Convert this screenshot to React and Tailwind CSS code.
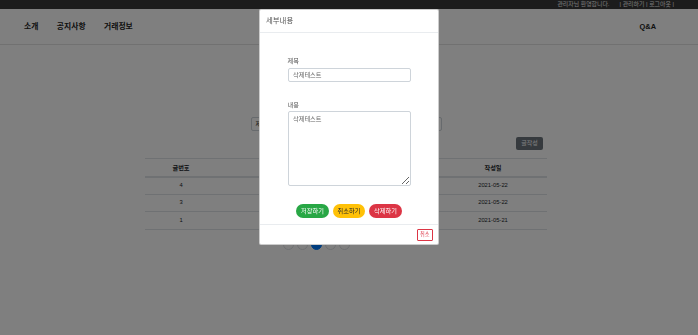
function TopBar() {
  return (
    <div className="flex h-[9px] items-center justify-end gap-[10px] bg-[#383838] pr-[24px] text-[5.9px] leading-none text-[#f0f0f0]">
      <span>관리자님 환영합니다.</span>
      <span>| 관리하기 | 로그아웃 |</span>
    </div>
  );
}

function NavBar() {
  return (
    <nav className="flex h-[36px] items-center justify-between border-b border-[#e2e2e2] pl-[24px] pr-[42px] text-[7.8px] font-bold text-[#222]">
      <div className="flex gap-[18.5px]">
        <span>소개</span>
        <span>공지사항</span>
        <span>거래정보</span>
      </div>
      <span className="text-[7.4px]">Q&amp;A</span>
    </nav>
  );
}

const rows = [
  { no: 4, date: '2021-05-22' },
  { no: 3, date: '2021-05-22' },
  { no: 1, date: '2021-05-21' },
];

function Board() {
  return (
    <div className="ml-[145px] w-[402px]">
      <div className="mt-[72px] flex justify-center">
        <div className="flex h-[14px] w-[191px] items-center rounded-[2px] border border-[#ced4da] px-[4px] text-[6px] text-[#212529]">
          제목
        </div>
      </div>
      <div className="mt-[6px] flex justify-end pr-[4px]">
        <button className="h-[13px] w-[27px] rounded-[2px] bg-[#6c757d] text-[6px] text-white">글작성</button>
      </div>
      <table className="mt-[8px] w-full border-collapse text-[5.8px] text-[#212529]">
        <thead>
          <tr className="h-[18px] border-t border-b-2 border-[#dee2e6] text-[6.2px]">
            <th className="w-[72px] font-bold">글번호</th>
            <th className="w-[111px] font-bold">제목</th>
            <th className="w-[111px] font-bold">작성자</th>
            <th className="w-[108px] font-bold">작성일</th>
          </tr>
        </thead>
        <tbody>
          {rows.map((row) => (
            <tr key={row.no} className="h-[17.5px] border-b border-[#dee2e6] text-center">
              <td>{row.no}</td>
              <td>삭제테스트</td>
              <td>관리자</td>
              <td>{row.date}</td>
            </tr>
          ))}
        </tbody>
      </table>
      <div className="mt-[9px] flex justify-center gap-[3px] pr-[60px]">
        {[1, 2, 3, 4, 5].map((n) => (
          <span
            key={n}
            className={`h-[11px] w-[11px] rounded-full border ${n === 3 ? 'border-[#007bff] bg-[#007bff]' : 'border-[#dee2e6] bg-white'}`}
          />
        ))}
      </div>
    </div>
  );
}

function DetailModal() {
  return (
    <div className="fixed inset-0 flex justify-center pt-[9px]">
      <div className="h-[236px] w-[180px] rounded-[2px] border border-black/20 bg-white">
        <div className="flex h-[23px] items-center border-b border-[#e9ecef] px-[6px] text-[7.4px] text-[#555]">
          세부내용
        </div>
        <div className="pb-[6px] pt-[23px]">
          <div className="mx-auto w-[123px] text-[6.2px]">
            <label className="block leading-[9px] text-[#555]">제목</label>
            <input
              type="text"
              defaultValue="삭제테스트"
              className="mt-[2.5px] block h-[14.5px] w-full rounded-[2px] border border-[#ced4da] px-[4.5px] text-[#666] outline-none"
            />
            <label className="mt-[18px] block leading-[9px] text-[#555]">내용</label>
            <textarea
              defaultValue="삭제테스트"
              className="mt-[1.5px] block h-[75px] w-full rounded-[2px] border border-[#ced4da] px-[4.5px] pt-[2px] leading-[9px] text-[#666] outline-none"
            />
          </div>
          <div className="mt-[18px] flex justify-center gap-[4px] text-[6.2px]">
            <button className="h-[14px] w-[33px] rounded-full bg-[#28a745] text-white">저장하기</button>
            <button className="h-[14px] w-[32px] rounded-full bg-[#ffc107] text-[#212529]">취소하기</button>
            <button className="h-[14px] w-[33px] rounded-full bg-[#dc3545] text-white">삭제하기</button>
          </div>
        </div>
        <div className="flex h-[22px] items-center justify-end border-t border-[#e9ecef] pr-[5px]">
          <button className="h-[12.5px] w-[16.5px] rounded-[1px] border border-[#dc3545] text-[5.2px] text-[#dc3545]">취소</button>
        </div>
      </div>
    </div>
  );
}

export default function App() {
  return (
    <div className="relative min-h-screen bg-white font-['Liberation_Sans','Noto_Sans_CJK_KR',sans-serif]">
      <TopBar />
      <NavBar />
      <Board />
      <div className="fixed inset-0 bg-black/50" />
      <DetailModal />
    </div>
  );
}
